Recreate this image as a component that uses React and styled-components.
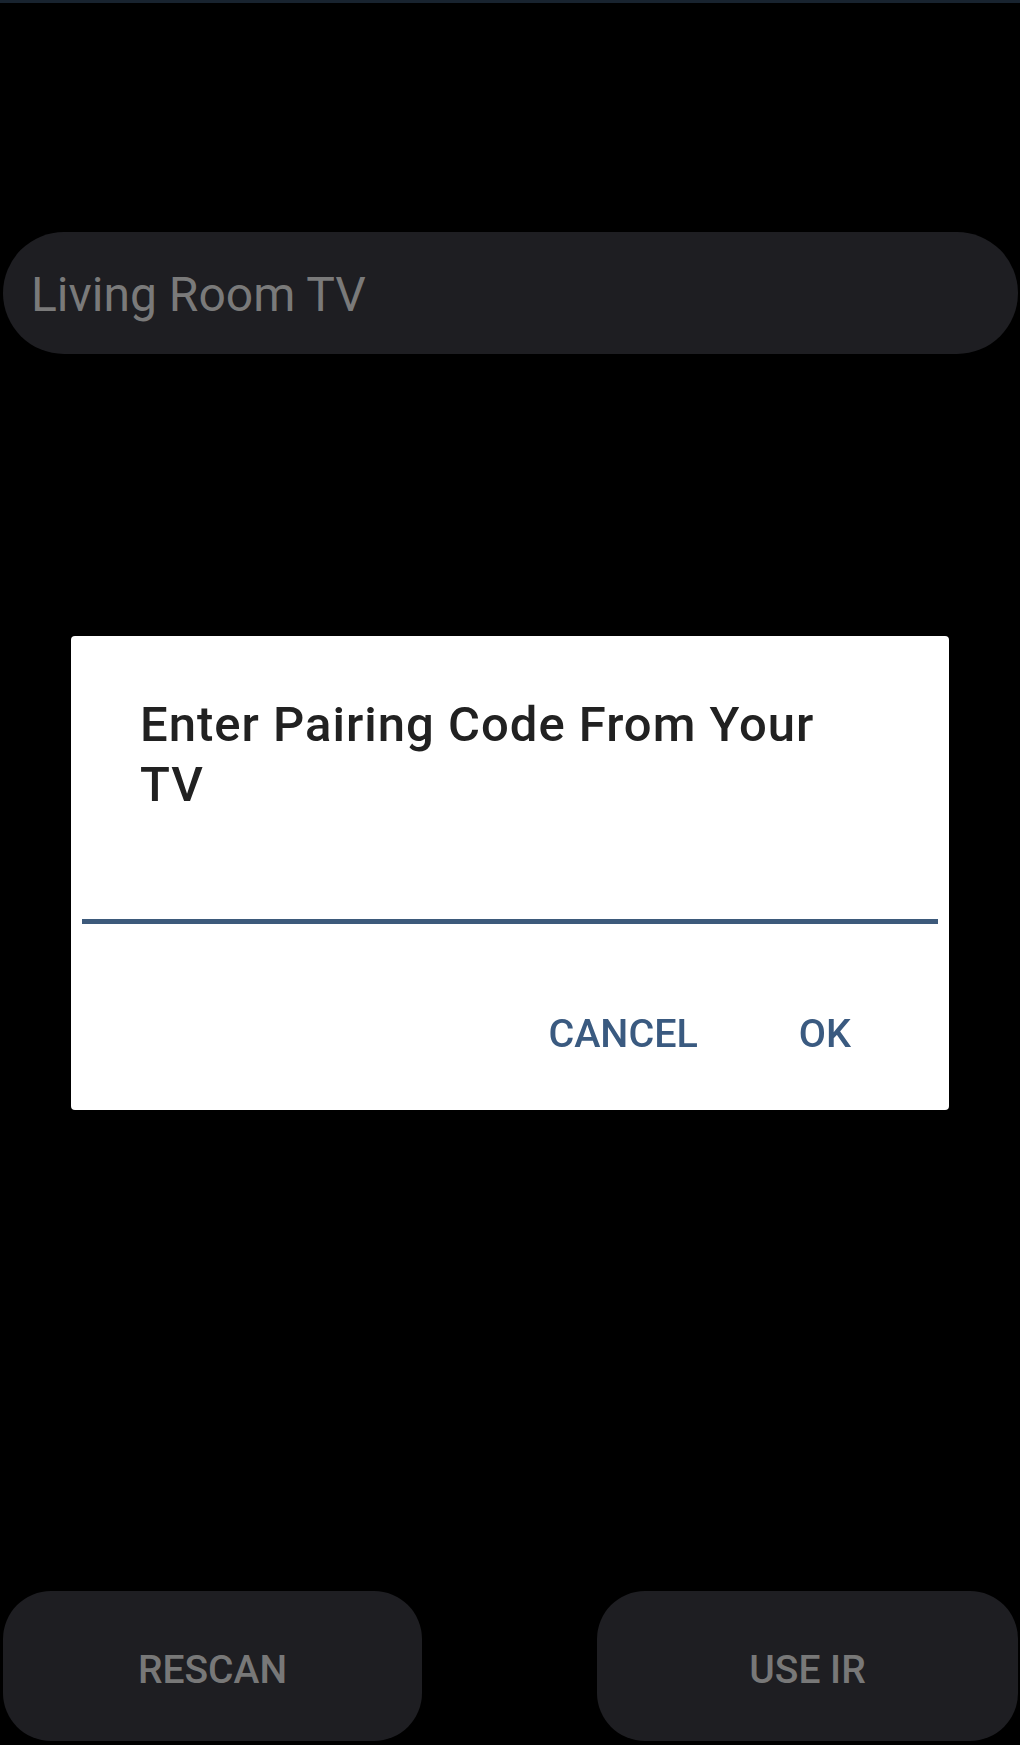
import React from 'react'
import styled, { createGlobalStyle } from 'styled-components'

const GlobalStyle = createGlobalStyle`
  html, body {
    margin: 0;
    padding: 0;
    background: #000;
  }
  body {
    font-family: Roboto, "Noto Sans", "Liberation Sans", sans-serif;
  }
`

const Screen = styled.div`
  min-height: 1745px;
  display: flex;
  flex-direction: column;
  background: #000;
  box-sizing: border-box;
`

const StatusStrip = styled.div`
  height: 3px;
  background: #18232f;
`

const DeviceField = styled.div`
  margin: 229px 2px 0 3px;
  height: 122px;
  border-radius: 61px;
  background: #1e1e22;
  display: flex;
  align-items: center;
  padding: 2px 0 0 28px;
  box-sizing: border-box;
  font-size: 48px;
  color: #7a7a7a;
`

const Spacer = styled.div`
  flex: 1;
`

const BottomRow = styled.div`
  display: flex;
  justify-content: space-between;
  padding: 0 2px 4px 3px;
`

const BigButton = styled.button`
  width: ${p => p.$w}px;
  height: 150px;
  border: none;
  border-radius: 48px;
  background: #1e1e22;
  color: #787878;
  font-family: Roboto, "Noto Sans", sans-serif;
  font-size: 39px;
  font-weight: 500;
  padding: 7px 0 0;
`

const Overlay = styled.div`
  position: fixed;
  inset: 0;
  display: flex;
  align-items: center;
  justify-content: center;
`

const Dialog = styled.div`
  width: 878px;
  height: 474px;
  box-sizing: border-box;
  background: #fff;
  border-radius: 4px;
  padding-top: 59px;
  display: flex;
  flex-direction: column;
`

const Title = styled.h2`
  margin: 0;
  padding: 0 119px 0 69px;
  font-size: 49px;
  line-height: 60px;
  letter-spacing: 1px;
  font-weight: 500;
  color: #212121;
`

const CodeInput = styled.input`
  margin: 44px 11px 0;
  height: 60px;
  box-sizing: content-box;
  padding: 0;
  border: none;
  border-bottom: 5px solid #3d5a7b;
  outline: none;
  background: transparent;
  font-family: Roboto, sans-serif;
  font-size: 40px;
`

const Actions = styled.div`
  margin-top: 86px;
  display: flex;
  justify-content: flex-end;
  gap: 101px;
  padding-right: 98px;
`

const TextButton = styled.button`
  border: none;
  background: none;
  padding: 0;
  font-family: Roboto, sans-serif;
  font-size: 39.5px;
  line-height: 48px;
  font-weight: 500;
  color: #3a5a80;
`

export default function App() {
  return (
    <>
      <GlobalStyle />
      <Screen>
        <StatusStrip />
        <DeviceField>Living Room TV</DeviceField>
        <Spacer />
        <BottomRow>
          <BigButton $w={419}>RESCAN</BigButton>
          <BigButton $w={421}>USE IR</BigButton>
        </BottomRow>
      </Screen>
      <Overlay>
        <Dialog>
          <Title>Enter Pairing Code From Your TV</Title>
          <CodeInput />
          <Actions>
            <TextButton>CANCEL</TextButton>
            <TextButton>OK</TextButton>
          </Actions>
        </Dialog>
      </Overlay>
    </>
  )
}
